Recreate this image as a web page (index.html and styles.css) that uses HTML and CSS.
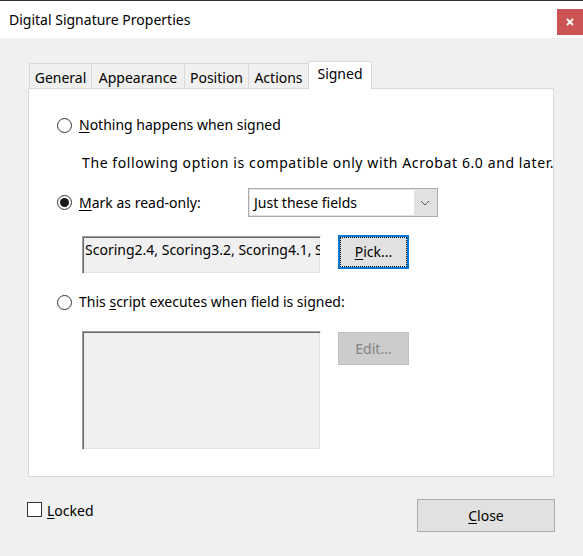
FILE: index.html
```html
<!DOCTYPE html>
<html>
<head>
<meta charset="utf-8">
<link rel="stylesheet" href="styles.css">
</head>
<body>
<div class="window">
  <div class="titlebar">
    <span class="title">Digital Signature Properties</span>
    <div class="x-btn"><svg width="10" height="10" viewBox="0 0 10 10"><path d="M2 2 L8 8 M8 2 L2 8" stroke="#fff" stroke-width="1.8" fill="none"/></svg></div>
  </div>
  <div class="content">
    <div class="tabs">
      <div class="tab t-general">General</div>
      <div class="tab t-appearance">Appearance</div>
      <div class="tab t-position">Position</div>
      <div class="tab t-actions">Actions</div>
      <div class="tab active">Signed</div>
    </div>
    <div class="panel">
      <div class="opt row1"><span class="radio"></span><span class="lbl"><u>N</u>othing happens when signed</span></div>
      <div class="note">The following option is compatible only with Acrobat 6.0 and later.</div>
      <div class="opt row2">
        <div class="radio-group"><span class="radio checked"></span><span class="lbl"><u>M</u>ark as read-only:</span></div>
        <div class="select"><span class="select-value">Just these fields</span><span class="select-arrow"><svg width="10" height="6" viewBox="0 0 10 6"><path d="M1 1 L5 5 L9 1" stroke="#606060" stroke-width="1" fill="none"/></svg></span></div>
      </div>
      <div class="field-row">
        <div class="listbox short">Scoring2.4, Scoring3.2, Scoring4.1, Scoring5.3</div>
        <div class="btn focused"><span><u>P</u>ick...</span></div>
      </div>
      <div class="opt row3"><span class="radio"></span><span class="lbl">This <u>s</u>cript executes when field is signed:</span></div>
      <div class="field-row script-row">
        <div class="listbox tall"></div>
        <div class="btn disabled"><span>Edit...</span></div>
      </div>
    </div>
    <div class="footer">
      <div class="check"><span class="box"></span><span class="lbl"><u>L</u>ocked</span></div>
      <div class="btn close"><span><u>C</u>lose</span></div>
    </div>
  </div>
</div>
</body>
</html>
```

FILE: styles.css
```css
* { box-sizing: border-box; }
html, body { margin: 0; padding: 0; }
body {
  width: 583px;
  height: 556px;
  background: #f0f0f0;
  font-family: "Noto Sans", "Open Sans", sans-serif;
  font-size: 14px;
  line-height: 20px;
  color: #000;
  overflow: hidden;
}
u { text-decoration-thickness: 1px; text-underline-offset: 2px; }

.window {
  width: 583px;
  height: 556px;
  border-top: 1px solid #2f2f2f;
}
.titlebar {
  height: 37px;
  background: #fff;
  display: flex;
  justify-content: space-between;
  align-items: flex-start;
}
.title {
  padding-left: 9px;
  padding-top: 9px;
  font-size: 14px;
}
.x-btn {
  margin-top: 8px;
  width: 26px;
  height: 26px;
  background: #cd5454;
  display: flex;
  align-items: center;
  justify-content: center;
}

.content {
  padding: 23px 29px 0 28px;
}
.tabs {
  display: flex;
  align-items: flex-end;
  height: 27px;
  margin-left: 1px;
}
.tab {
  height: 25px;
  border: 1px solid #d9d9d9;
  border-bottom: none;
  margin-left: -1px;
  background: #f0f0f0;
  line-height: 27px;
  text-align: center;
  white-space: nowrap;
}
.t-general { margin-left: 0; width: 63px; }
.t-appearance { width: 94px; }
.t-position { width: 65px; }
.t-actions { width: 61px; }
.tab.active {
  position: relative;
  z-index: 1;
  width: 64px;
  height: 28px;
  margin-bottom: -1px;
  background: #fff;
  line-height: 24px;
}

.panel {
  height: 389px;
  background: #fff;
  border: 1px solid #d9d9d9;
  padding-left: 28px;
  display: flex;
  flex-direction: column;
  align-items: flex-start;
}
.opt {
  display: flex;
  align-items: center;
}
.radio-group { display: flex; align-items: center; width: 191px; }
.radio {
  width: 15px;
  height: 15px;
  border: 1px solid #333;
  border-radius: 50%;
  background: #fff;
  margin-right: 7px;
  display: flex;
  align-items: center;
  justify-content: center;
  flex: none;
}
.radio.checked::after {
  content: "";
  width: 9px;
  height: 9px;
  border-radius: 50%;
  background: #1a1a1a;
}
.row1 { margin-top: 26px; height: 20px; }
.note { margin-top: 18px; margin-left: 25px; height: 20px; letter-spacing: 0.6px; white-space: nowrap; }
.row2 { margin-top: 15px; height: 29px; }
.row3 { margin-top: 18px; height: 20px; }

.select {
  width: 190px;
  height: 29px;
  border: 1px solid #adadad;
  background: #e1e1e1;
  display: flex;
  padding: 1px;
}
.select-value {
  width: 164px;
  background: #fff;
  padding-left: 4px;
  line-height: 25px;
}
.select-arrow {
  flex: 1;
  display: flex;
  align-items: center;
  justify-content: center;
}

.field-row {
  display: flex;
  align-items: flex-start;
  margin-left: 25px;
  margin-top: 18px;
  gap: 17px;
}
.script-row { margin-top: 19px; }
.listbox {
  width: 239px;
  background: #f0f0f0;
  border: 1px solid;
  border-color: #a0a0a0 #ffffff #ffffff #a0a0a0;
  box-shadow: inset 1px 1px 0 #696969, inset -1px -1px 0 #e3e3e3;
  white-space: nowrap;
  overflow: hidden;
  padding: 3px 0 0 2px;
  margin-top: 1px;
}
.listbox.short { height: 38px; }
.listbox.tall { height: 119px; margin-top: 0; }

.btn {
  width: 71px;
  height: 34px;
  border: 1px solid #adadad;
  background: #e1e1e1;
  display: flex;
  align-items: center;
  justify-content: center;
}
.btn.focused {
  border: 2px solid #0078d7;
  outline: 1px dotted #000;
  outline-offset: -3px;
}
.btn.disabled {
  height: 33px;
  margin-top: 1px;
  background: #cccccc;
  border-color: #bfbfbf;
  color: #838383;
}

.footer {
  display: flex;
  justify-content: space-between;
  align-items: flex-start;
  margin-top: 22px;
  margin-left: -1px;
  margin-right: -1px;
}
.check {
  display: flex;
  align-items: flex-start;
  padding-top: 3px;
}
.box {
  width: 15px;
  height: 15px;
  border: 1px solid #333;
  background: #fff;
  margin-right: 5px;
}
.check .lbl { margin-top: -1px; }
.btn.close {
  width: 138px;
  height: 33px;
}
```
